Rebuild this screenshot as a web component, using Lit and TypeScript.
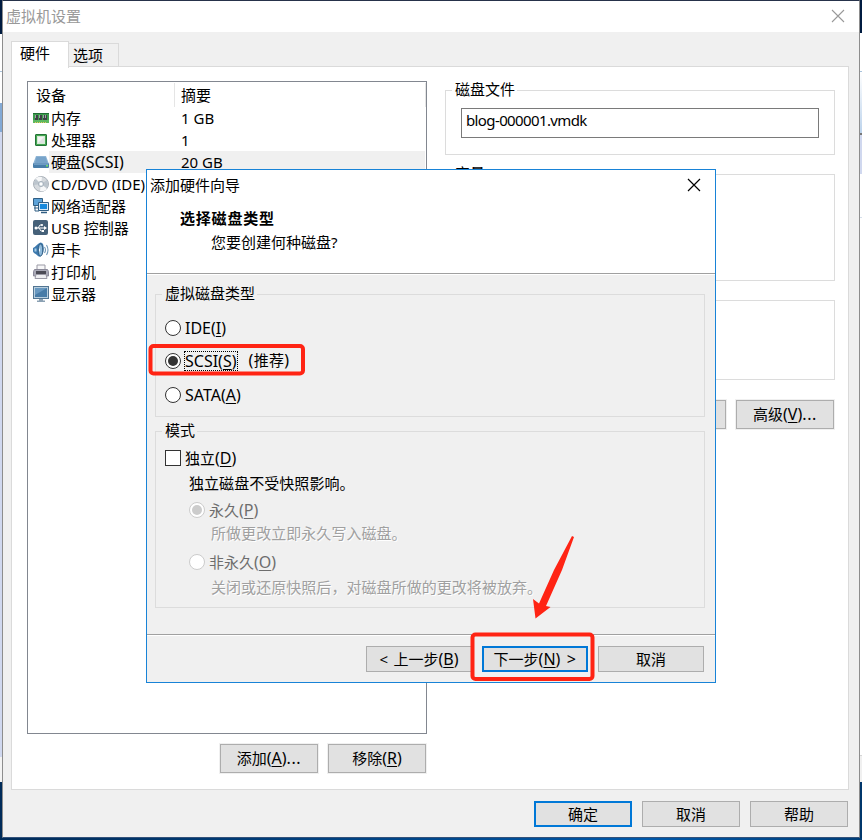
import { LitElement, html, css, svg, nothing } from "lit";
import { customElement, property } from "lit/decorators.js";

const icons: Record<string, unknown> = {
  memory: svg`<rect y="3" width="16" height="8" fill="#3c9c4b"/><rect y="3" width="16" height="1" fill="#1f6d34"/>
    <path d="M2 5h3v5H2zM6 5h3v5H6zM10 5h4v5h-4z" fill="#3d4145"/><path d="M2 5h1v3H2zM6 5h1v3H6zM10 5h1v3h-1zM12 5h1v3h-1z" fill="#9aa2a6"/>
    <rect y="10" width="16" height="3" fill="#5cb860"/><path d="M2 12.500h12" stroke="#e8c860" stroke-dasharray="1 1"/>`,
  cpu: svg`<rect x="2.5" y="2.5" width="11" height="11" rx=".5" fill="#45a552" stroke="#237536"/><rect x="4.500" y="4.500" width="7" height="7" fill="#f4f4f4" stroke="#d5ecd5"/><path d="M5 11l6-6v6z" fill="#dfe2e2"/>`,
  disk: svg`<path d="M3 2h10l3 8H0z" fill="#8fb5d5"/><path d="M3.500 3h9l2 6H2z" fill="#78a4ca"/><path d="M0 9.500h16V13q0 1-1 1H1q-1 0-1-1z" fill="#487da9"/><path d="M1 10.500h14" stroke="#6d9cc4"/><rect x="13" y="11" width="2" height="1.500" fill="#70df63"/>`,
  cd: svg`<circle cx="8" cy="8" r="7.500" fill="#d6dade" stroke="#a9b1b9"/><path d="M8 8L2 3Q5 0 9 1zM8 8l6 5q-3 3-7 2z" fill="#f7f8f9"/><path d="M8 8l6-4q2 4 0 8zM8 8L1 9q0-4 2-6z" fill="#bcc5cd"/><circle cx="8" cy="8" r="2.600" fill="#dbe3e9" stroke="#a9b3bd"/><circle cx="8" cy="8" r="1.200" fill="#fff"/>`,
  network: svg`<path d="M.5.5h9v7h-9z" fill="#5ea3d8" stroke="#315e83"/><path d="M2 8v5h4M1 10h4" stroke="#315e83" fill="none"/><path d="M5.500 4.500h10v8h-10z" fill="#d7e9f7" stroke="#315e83"/><path d="M7 6h7v5H7z" fill="#1789dd"/><path d="M8 14.500h6" stroke="#315e83" stroke-width="1.500"/>`,
  usb: svg`<rect width="15" height="15" rx="2" fill="#466179"/><path d="M3 8h9M5 8l2-3h2M6 8l2 3h2" stroke="#fff" stroke-width="1" fill="none"/><circle cx="3" cy="8" r="1.500" fill="#fff"/><path d="M11 6l3 2-3 2z" fill="#fff"/><circle cx="9" cy="5" r="1.100" fill="#fff"/><rect x="9" y="10" width="2" height="2" fill="#fff"/>`,
  sound: svg`<path d="M0 6q2-1 5-4 3-3 5 0 2 6-1 11-2 3-4 1-2-2-4-3-2-2-1-5z" fill="#3d79ad"/><ellipse cx="7.500" cy="8" rx="2.300" ry="6" fill="#8fbbdc" stroke="#315d82"/><path d="M1.500 6.500h2v3h-2z" fill="#a6cce6"/><path d="M6 6q2 2 0 4z" fill="#fff"/><path d="M11.500 5q2 3 0 6M13.500 3q3 5 0 10" fill="none" stroke="#7198b7" stroke-width="1.100"/>`,
  printer: svg`<path d="M4 1h8v6H4z" fill="#f7f7f8" stroke="#9b9aa5"/><path d="M1.500 5.500h13l1 2V12H.5V7.500z" fill="#a9a9b6" stroke="#8a8999"/><rect x="3" y="7" width="10" height="3" fill="#4c4b55"/><path d="M3 10.500h10l1 4H2z" fill="#eeeef1" stroke="#9b9aa5"/>`,
  display: svg`<rect x=".5" y=".5" width="15" height="12" fill="#b9cfdf" stroke="#527592"/><rect x="2" y="2" width="12" height="9" fill="#477ba7"/><path d="M2 2h12L2 9z" fill="#6898c0"/><path d="M6 13h4v1.500h2V16H4v-1.500h2z" fill="#8ba1b3"/>`,
};

const base = css`
  :host { font: 15px/20px "Noto Sans", "Noto Sans CJK SC", sans-serif; color: #000; }
  * { box-sizing: border-box; }
  .latin { font-size: 16px; }
  u { text-decoration: underline; text-decoration-thickness: 1px; text-underline-offset: 2px; }
`;

@customElement("win-button")
class WinButton extends LitElement {
  @property() label = "";
  @property() key = "";
  @property() tail = "";
  static styles = [base, css`
    :host { display: flex; align-items: center; justify-content: center; box-sizing: border-box; width: 98px; height: 26px;
      background: #e1e1e1; border: 1px solid #adadad; white-space: pre; flex: none; padding-bottom: 1px; word-spacing: 1.5px; }
    :host([focused]) { border: 2px solid #0078d7; }
    :host([tall]) { height: 29px; box-shadow: 0 0 0 1px #f0f0f0; padding-bottom: 2px; }
    :host([wide]) { width: 106px; }
    .tail { letter-spacing: 0.6px; }
  `];
  render() {
    return html`<span>${this.label}<span class="latin">${this.key ? html`(<u>${this.key}</u>)` : nothing}<span class="tail">${this.tail}</span></span></span>`;
  }
}

@customElement("group-box")
class GroupBox extends LitElement {
  @property() legend = "";
  static styles = [base, css`
    :host { display: block; box-sizing: border-box; border: 1px solid #dcdcdc; flex: none; }
    .legend { display: block; width: max-content; height: 21px; margin: -12px 0 0 6px; padding: 0 2px 0 3px; background: var(--face, #fff); }
  `];
  render() {
    return html`${this.legend ? html`<span class="legend">${this.legend}</span>` : nothing}<slot></slot>`;
  }
}

@customElement("option-row")
class OptionRow extends LitElement {
  @property() label = "";
  @property() key = "";
  @property() note = "";
  static styles = [base, css`
    :host { display: flex; align-items: center; height: 20px; }
    .mark { width: 16px; height: 16px; flex: none; display: grid; place-items: center; border: 1px solid #333; border-radius: 50%; background: #fff; margin-right: 3px; }
    :host([square]) .mark { border-radius: 0; }
    :host([checked]) .mark::after { content: ""; width: 10px; height: 10px; border-radius: 50%; background: #333; }
    .text { padding: 0 1px; height: 20px; white-space: nowrap; }
    :host([focused]) .text { outline: 1px dotted #000; outline-offset: -1px; }
    .note { margin: -2px 0 0 11px; letter-spacing: 0.3px; }
    :host([disabled]) { color: #6d6d6d; }
    :host([disabled]) .mark { border-color: #ccc; }
    :host([disabled][checked]) .mark::after { background: #ccc; }
  `];
  render() {
    const latinLabel = /^[A-Z]+$/.test(this.label);
    return html`<span class="mark"></span><span class="text"><span class=${latinLabel ? "latin" : ""}>${this.label}</span><span class="latin">(<u>${this.key}</u>)</span></span>
      ${this.note ? html`<span class="note"><span class="latin">(</span>${this.note}<span class="latin">)</span></span>` : nothing}`;
  }
}

@customElement("device-list")
class DeviceList extends LitElement {
  devices = [
    ["memory", "内存", "", "1 GB"], ["cpu", "处理器", "", "1"], ["disk", "硬盘", "(SCSI)", "20 GB"],
    ["cd", "CD/DVD (IDE)", "", ""], ["network", "网络适配器", "", ""], ["usb", "USB 控制器", "", ""],
    ["sound", "声卡", "", ""], ["printer", "打印机", "", ""], ["display", "显示器", "", ""],
  ];
  static styles = [base, css`
    :host { display: block; box-sizing: border-box; width: 400px; height: 653px; border: 1px solid #828790; padding-top: 1px; }
    .head { display: flex; height: 24px; line-height: 24px; }
    .head span:first-child { width: 147px; padding-left: 8px; border-right: 1px solid #e5e5e5; }
    .head span:last-child { width: 251px; padding-left: 6px; border-right: 1px solid #e5e5e5; }
    .row { display: flex; height: 22px; line-height: 22px; padding-left: 5px; }
    svg { width: 16px; height: 16px; margin-top: 3px; flex: none; }
    .cells { display: flex; flex: 1; padding-left: 2px; margin-right: 1px; white-space: nowrap; }
    .selected { background: #f0f0f0; }
    .name { width: 130px; flex: none; }
  `];
  render() {
    return html`<div class="head"><span>设备</span><span>摘要</span></div>
      ${this.devices.map(([icon, name, bus, summary]) => html`<div class="row">
        <svg viewBox="0 0 16 16">${icons[icon]}</svg>
        <div class="cells ${icon === "disk" ? "selected" : ""}"><span class="name">${name}<span class="latin">${bus}</span></span><span>${summary}</span></div>
      </div>`)}`;
  }
}

@customElement("hardware-wizard")
class HardwareWizard extends LitElement {
  static styles = [base, css`
    :host { display: flex; flex-direction: column; box-sizing: border-box; width: 570px; height: 514px; border: 1px solid #1883d7; background: #f0f0f0; --face: #f0f0f0; }
    .top { height: 104px; flex: none; background: #fff; border-bottom: 1px solid #a0a0a0; box-shadow: 0 1px #fff; }
    .title { display: flex; justify-content: space-between; height: 30px; padding: 5px 14px 0 3px; }
    .title svg { width: 14px; height: 14px; margin-top: 3px; }
    h1 { font-size: 15px; line-height: 20px; letter-spacing: 0.8px; margin: 8px 0 0 33px; }
    .ask { margin: 4px 0 0 64px; }
    .types { height: 123px; margin: 20px 10px 0 8px; }
    .types option-row { margin-left: 9px; }
    .mode { height: 177px; margin: 14px 10px 0 8px; }
    .mode p { margin: 0; height: 20px; letter-spacing: 0.05px; white-space: nowrap; }
    .gray { color: #a0a0a0; text-shadow: 1px 1px #fff; }
    .bar { margin-top: 26px; height: 48px; flex: none; border-top: 1px solid #a0a0a0; box-shadow: inset 0 1px #fff; display: flex; justify-content: flex-end; gap: 10px; padding: 11px 11px 0 0; }
    .s1 { margin-top: 14px; } .s2 { margin-top: 13px; } .s3 { margin-top: 14px; }
    .c1 { margin: 7px 0 0 9px; }
    .mode .p1 { margin: 5px 0 0 33px; }
    .r1 { margin: 7px 0 0 33px; }
    .mode .p2 { margin: 3px 0 0 55px; }
    .r2 { margin: 9px 0 0 33px; }
    .mode .p3 { margin: 5px 0 0 55px; }
  `];
  render() {
    return html`<div class="top">
        <div class="title"><span>添加硬件向导</span><svg viewBox="0 0 14 14"><path d="M1 1L13 13M13 1L1 13" stroke="#000" stroke-width="1.2"/></svg></div>
        <h1>选择磁盘类型</h1>
        <div class="ask">您要创建何种磁盘?</div>
      </div>
      <group-box class="types" legend="虚拟磁盘类型">
        <option-row class="s1" label="IDE" key="I"></option-row>
        <option-row class="s2" label="SCSI" key="S" note="推荐" checked focused></option-row>
        <option-row class="s3" label="SATA" key="A"></option-row>
      </group-box>
      <group-box class="mode" legend="模式">
        <option-row class="c1" label="独立" key="D" square></option-row>
        <p class="p1">独立磁盘不受快照影响。</p>
        <option-row class="r1" label="永久" key="P" checked disabled></option-row>
        <p class="p2 gray">所做更改立即永久写入磁盘。</p>
        <option-row class="r2" label="非永久" key="O" disabled></option-row>
        <p class="p3 gray">关闭或还原快照后，对磁盘所做的更改将被放弃。</p>
      </group-box>
      <div class="bar">
        <win-button wide label="< 上一步" key="B"></win-button>
        <win-button wide focused label="下一步" key="N" tail=" >"></win-button>
        <win-button wide label="取消"></win-button>
      </div>`;
  }
}

@customElement("app-root")
class AppRoot extends LitElement {
  static styles = [base, css`
    :host { display: grid; position: relative; grid-template-columns: 2px 858px 2px; grid-template-rows: 838px 2px; width: 862px; height: 840px; overflow: hidden; }
    .left { background: linear-gradient(#001b40 0 34px, #fff 34px 71px, #a9c3dc 71px 72px, #fff 72px 103px, #82a9d5 103px 132px, #d0d8ef 132px 757px, #f3f3f3 757px 782px, #002b59 782px); }
    .right { background: linear-gradient(#001b40 0 33px, #fff 33px 71px, #a9c3dc 71px 72px, #fff 72px, #bcd3ec 133px, #777 133px 135px, #d0d8ef 135px 174px, #fff 174px 217px, #d5dfea 217px 218px, #fff 218px 755px, #d5d5d5 755px 756px, #f0f0f0 756px 782px, #00366b 782px); }
    .bottom { grid-column: 1 / -1; background: linear-gradient(90deg, #002b59, #004a91 55%, #0058aa 75%, #003d77); }
    .window { display: flex; flex-direction: column; background: #f0f0f0; border: 1px solid #8d8d8d; border-top-color: #26324a; border-bottom-color: #34527a; }
    .title { display: flex; justify-content: space-between; height: 31px; flex: none; background: #fff; color: #999; padding: 5px 14px 0 3px; }
    .title svg { width: 14px; height: 14px; margin-top: 3px; }
    .tabs { display: flex; align-items: flex-end; height: 35px; flex: none; padding-left: 8px; }
    .tab { border: 1px solid #dadada; border-bottom: 0; height: 24px; width: 51px; padding: 1px 0 0 4px; margin-left: -1px; }
    .tab.on { background: #fff; width: 58px; height: 27px; padding: 1px 0 0 8px; margin: 0 0 -1px; z-index: 1; }
    .page { display: flex; width: 838px; height: 724px; flex: none; margin: -1px 0 0 8px; padding: 14px 13px 0 15px; background: #fff; border: 1px solid #dadada; }
    .actions { display: flex; justify-content: flex-end; gap: 10px; margin: 10px 1px 0 0; }
    .details { margin-left: 18px; width: 390px; display: flex; flex-direction: column; }
    .file { height: 65px; margin-top: 9px; }
    .field { width: 358px; height: 30px; margin: 8px 0 0 15px; border: 1px solid #7a7a7a; padding: 1px 4px; letter-spacing: -0.62px; }
    .cap { height: 107px; margin-top: 19px; }
    .info { height: 80px; margin-top: 19px; }
    .more { margin-top: 20px; }
    .footer { display: flex; justify-content: flex-end; gap: 10px; padding: 11px 11px 0 0; }
    hardware-wizard { position: absolute; left: 146px; top: 169px; }
    .marks { position: absolute; left: 0; top: 0; width: 862px; height: 840px; pointer-events: none; }
  `];
  render() {
    return html`<div class="left"></div>
      <div class="window">
        <div class="title"><span>虚拟机设置</span><svg viewBox="0 0 14 14"><path d="M1 1L13 13M13 1L1 13" stroke="#999" stroke-width="1.1"/></svg></div>
        <div class="tabs"><span class="tab on">硬件</span><span class="tab">选项</span></div>
        <div class="page">
          <div>
            <device-list></device-list>
            <div class="actions">
              <win-button tall label="添加" key="A" tail="..."></win-button>
              <win-button tall label="移除" key="R"></win-button>
            </div>
          </div>
          <div class="details">
            <group-box class="file" legend="磁盘文件"><div class="field">blog-000001.vmdk</div></group-box>
            <group-box class="cap" legend="容量"></group-box>
            <group-box class="info"></group-box>
            <div class="actions more">
              <win-button tall></win-button>
              <win-button tall label="高级" key="V" tail="..."></win-button>
            </div>
          </div>
        </div>
        <div class="footer">
          <win-button focused label="确定"></win-button>
          <win-button label="取消"></win-button>
          <win-button label="帮助"></win-button>
        </div>
      </div>
      <div class="right"></div>
      <div class="bottom"></div>
      <hardware-wizard></hardware-wizard>
      <svg class="marks" viewBox="0 0 862 840">
        <g fill="none" stroke="#ff2414" stroke-width="4">
          <rect x="150.500" y="346" width="152.500" height="27.500" rx="3"/>
          <rect x="472.500" y="634.500" width="120" height="44.500" rx="3"/>
        </g>
        <path d="M572 536L574 537L562 570L546 606L550.500 607L535.500 618.500L533 599L539 603.500L554 570Z" fill="#ff2414"/>
      </svg>`;
  }
}
